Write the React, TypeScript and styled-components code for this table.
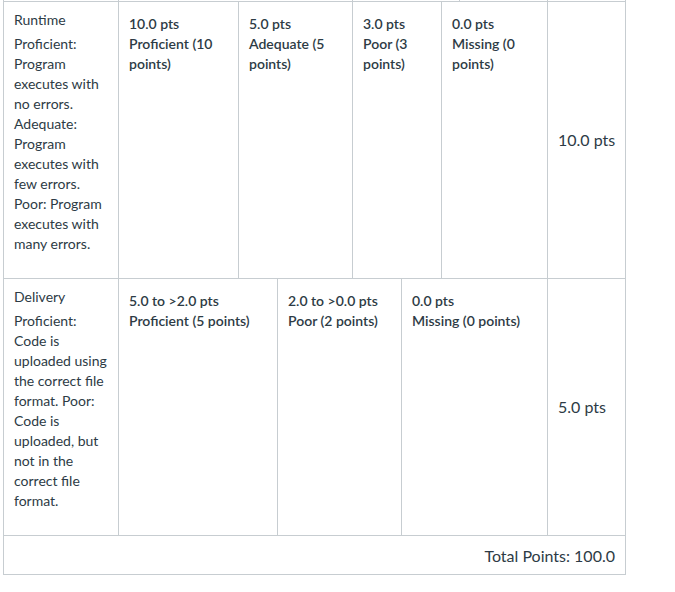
import React from 'react';
import styled, { createGlobalStyle } from 'styled-components';

const GlobalStyle = createGlobalStyle`
    html, body {
        margin: 0;
        padding: 0;
        background: #fff;
    }
    body {
        font-family: Lato, "Liberation Sans", sans-serif;
        font-size: 14px;
        color: #2d3b45;
    }
    * {
        box-sizing: border-box;
    }
`

type Rating = { pts: string; label: string; width: number }
type Criterion = { title: string; description: string; rating: Rating[]; points: string }

const criteria: Criterion[] = [
    {
        title: "Runtime",
        description: "Proficient: Program executes with no errors. Adequate: Program executes with few errors. Poor: Program executes with many errors.",
        rating: [
            { pts: "10.0 pts", label: "Proficient (10 points)", width: 120 },
            { pts: "5.0 pts", label: "Adequate (5 points)", width: 114 },
            { pts: "3.0 pts", label: "Poor (3 points)", width: 89 },
            { pts: "0.0 pts", label: "Missing (0 points)", width: 105 },
        ],
        points: "10.0 pts",
    },
    {
        title: "Delivery",
        description: "Proficient: Code is uploaded using the correct file format. Poor: Code is uploaded, but not in the correct file format.",
        rating: [
            { pts: "5.0 to >2.0 pts", label: "Proficient (5 points)", width: 159 },
            { pts: "2.0 to >0.0 pts", label: "Poor (2 points)", width: 124 },
            { pts: "0.0 pts", label: "Missing (0 points)", width: 145 },
        ],
        points: "5.0 pts",
    },
]

// row scrolled above the visible area, only its bottom edge shows
const hiddenTiers = [234, 107, 87]

function App() {
    return (
        <>
            <GlobalStyle/>
            <Page>
                <Rubric>
                    <Row $height={40}>
                        <CritCell/>
                        <RatingsCell>
                            {hiddenTiers.map((w, i) => <Tier key={i} $width={w}/>)}
                        </RatingsCell>
                        <PointsCell/>
                    </Row>
                    {criteria.map((c) => (
                        <Row key={c.title}>
                            <CritCell>
                                <CritTitle>{c.title}</CritTitle>
                                <CritDesc>{c.description}</CritDesc>
                            </CritCell>
                            <RatingsCell>
                                {c.rating.map((r) => (
                                    <Tier key={r.pts} $width={r.width}>
                                        <TierText>{r.pts}</TierText>
                                        <TierText>{r.label}</TierText>
                                    </Tier>
                                ))}
                            </RatingsCell>
                            <PointsCell>{c.points}</PointsCell>
                        </Row>
                    ))}
                    <TotalRow>Total Points: 100.0</TotalRow>
                </Rubric>
            </Page>
        </>
    );
}

const Page = styled.div`
    padding-left: 3px;
    overflow: hidden;
    height: 592px;
`
const Rubric = styled.div`
    width: 623px;
    margin-top: -39px;
    border: 1px solid #c7cdd1;
`
const Row = styled.div<{ $height?: number }>`
    display: grid;
    grid-template-columns: 115px 429px 1fr;
    border-bottom: 1px solid #c7cdd1;
    ${(p) => p.$height ? `height: ${p.$height}px;` : ''}
`
const CritCell = styled.div`
    border-right: 1px solid #c7cdd1;
    padding: 8px 10px 24px 10px;
    line-height: 20px;
`
const CritTitle = styled.div`
    line-height: 20px;
`
const CritDesc = styled.div`
    margin-top: 4px;
    line-height: 20px;
`
const RatingsCell = styled.div`
    display: flex;
    align-items: stretch;
    border-right: 1px solid #c7cdd1;
`
const Tier = styled.div<{ $width: number }>`
    flex: 0 0 ${(p) => p.$width}px;
    padding: 12px 10px;
    border-right: 1px solid #c7cdd1;
    &:last-child {
        border-right: none;
    }
`
const TierText = styled.div`
    font-weight: 600;
    line-height: 20px;
`
const PointsCell = styled.div`
    display: flex;
    align-items: center;
    padding: 0 0 0 10px;
    font-size: 16px;
    line-height: 20px;
    white-space: nowrap;
`
const TotalRow = styled.div`
    height: 38px;
    display: flex;
    align-items: center;
    justify-content: flex-end;
    padding-right: 10px;
    font-size: 16px;
`

export default App;
